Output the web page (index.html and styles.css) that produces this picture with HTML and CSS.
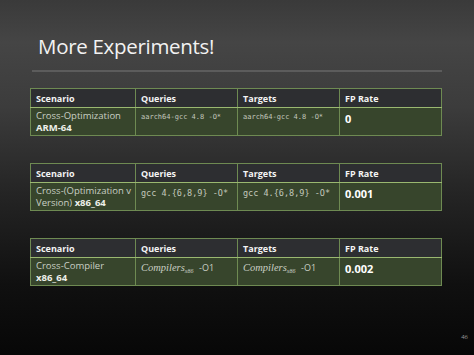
FILE: index.html
```html
<!DOCTYPE html>
<html>
<head>
<meta charset="utf-8">
<link rel="stylesheet" href="styles.css">
</head>
<body>
<div class="slide">
  <h1 class="title">More Experiments!</h1>
  <div class="rule"></div>
  <div class="tables">
    <table class="exp">
      <colgroup><col class="c1"><col class="c2"><col class="c3"><col class="c4"></colgroup>
      <thead><tr><th>Scenario</th><th>Queries</th><th>Targets</th><th>FP Rate</th></tr></thead>
      <tbody><tr>
        <td class="scen">Cross-Optimization <b>ARM-64</b></td>
        <td class="mono small">aarch64-gcc 4.8 -O*</td>
        <td class="mono small">aarch64-gcc 4.8 -O*</td>
        <td class="rate">0</td>
      </tr></tbody>
    </table>
    <table class="exp">
      <colgroup><col class="c1"><col class="c2"><col class="c3"><col class="c4"></colgroup>
      <thead><tr><th>Scenario</th><th>Queries</th><th>Targets</th><th>FP Rate</th></tr></thead>
      <tbody><tr>
        <td class="scen">Cross-(Optimization v Version) <b>x86_64</b></td>
        <td class="mono">gcc 4.{6,8,9} -O*</td>
        <td class="mono">gcc 4.{6,8,9} -O*</td>
        <td class="rate">0.001</td>
      </tr></tbody>
    </table>
    <table class="exp">
      <colgroup><col class="c1"><col class="c2"><col class="c3"><col class="c4"></colgroup>
      <thead><tr><th>Scenario</th><th>Queries</th><th>Targets</th><th>FP Rate</th></tr></thead>
      <tbody><tr>
        <td class="scen">Cross-Compiler <b>x86_64</b></td>
        <td class="math"><i>Compilers</i><sub><i>x86</i></sub> <span class="flag">-O1</span></td>
        <td class="math"><i>Compilers</i><sub><i>x86</i></sub> <span class="flag">-O1</span></td>
        <td class="rate">0.002</td>
      </tr></tbody>
    </table>
  </div>
  <div class="pagenum">46</div>
</div>
</body>
</html>
```

FILE: styles.css
```css
html, body {
  margin: 0;
  padding: 0;
}
body {
  width: 474px;
  height: 355px;
  overflow: hidden;
  background: linear-gradient(to bottom, #3a3a3a 0%, #454545 12%, #3c3c3c 30%, #242424 55%, #101010 80%, #070707 100%);
  font-family: "Open Sans", "Noto Sans", sans-serif;
}
.slide {
  position: relative;
  height: 355px;
  padding: 0 32px 0 30px;
  box-sizing: border-box;
}
.title {
  margin: 0;
  padding: 31px 0 0 8px;
  font-size: 20.5px;
  font-weight: 400;
  line-height: 30px;
  color: #f2f2f2;
  letter-spacing: -0.3px;
}
.rule {
  margin: 9px 0 0 2px;
  height: 2px;
  background: #5c5c5c;
}
.tables {
  display: flex;
  flex-direction: column;
  gap: 27px;
  margin-top: 16px;
}
.exp {
  width: 411px;
  border-collapse: collapse;
  table-layout: fixed;
}
.c1 { width: 105px; }
.c2 { width: 102px; }
.c3 { width: 102px; }
.c4 { width: 102px; }
.exp th, .exp td {
  border: 1px solid #6e8a52;
  text-align: left;
  vertical-align: top;
}
.exp th {
  background: #2d2e31;
  color: #f4f4f4;
  font-size: 9px;
  font-weight: 700;
  height: 19px;
  padding: 2px 4px 0 5px;
  line-height: 15px;
  box-sizing: border-box;
}
.exp thead tr th {
  border-bottom: 1px solid #9ab870;
}
.exp td {
  background: #37452c;
  color: #c9cfc4;
  height: 28px;
  padding: 2px 4px 0 5px;
  box-sizing: border-box;
  font-size: 9.5px;
  line-height: 12px;
}
.exp td.scen b {
  color: #eef0ea;
  font-weight: 700;
}
.exp td.mono {
  font-family: "DejaVu Sans Mono", monospace;
  font-size: 8.5px;
  padding-top: 4px;
  color: #c3c8bd;
  white-space: nowrap;
}
.exp td.mono.small {
  font-size: 7px;
  padding-top: 3px;
}
.exp td.rate {
  color: #ffffff;
  font-weight: 700;
  font-size: 11px;
  line-height: 14px;
  padding-top: 4px;
}
.exp td.math {
  font-family: "Liberation Serif", serif;
  font-size: 10.5px;
  line-height: 14px;
  color: #c9cfc4;
  padding-top: 3px;
  white-space: nowrap;
}
.exp td.math sub {
  font-size: 6px;
  line-height: 0;
  vertical-align: -2px;
}
.exp td.math .flag {
  font-family: "Open Sans", sans-serif;
  font-size: 9px;
  margin-left: 3px;
}
.pagenum {
  position: absolute;
  right: 6px;
  bottom: 14px;
  font-size: 6px;
  color: #9a9a9a;
}
```
